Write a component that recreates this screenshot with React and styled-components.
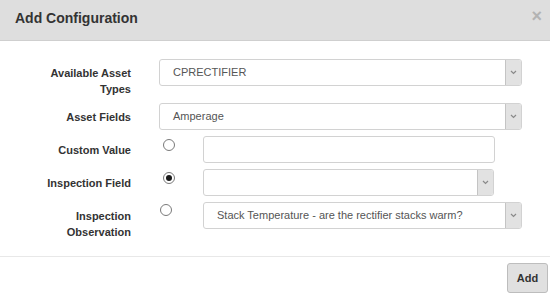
import styled, { createGlobalStyle } from "styled-components";

const GlobalStyle = createGlobalStyle`
    body {
        margin: 0;
        background: #fff;
        font-family: "Liberation Sans", Arial, sans-serif;
    }
`;

const rows = [
    { label: "Available Asset Types", value: "CPRECTIFIER", select: true },
    { label: "Asset Fields", value: "Amperage", select: true },
    { label: "Custom Value", radio: false, value: "", width: 292 },
    { label: "Inspection Field", radio: true, value: "", select: true, width: 291 },
    { label: "Inspection Observation", radio: false, value: "Stack Temperature - are the rectifier stacks warm?", select: true, shift: true },
];

const Chevron = () => (
    <svg width="7" height="5" viewBox="0 0 7 5">
        <path d="M1 1 L3.5 3.5 L6 1" fill="none" stroke="#8a8a8a" strokeWidth="1.2" />
    </svg>
);

const App = () => {
    return (
        <Modal>
            <GlobalStyle />
            <Header>
                <Title>Add Configuration</Title>
                <Close>×</Close>
            </Header>

            <Body>
                {rows.map((row) => (
                    <Row key={row.label}>
                        <Label>{row.label}</Label>
                        <Controls>
                            {row.radio !== undefined && (
                                <RadioCell $shift={row.shift}>
                                    <Radio $checked={row.radio} />
                                </RadioCell>
                            )}
                            <Field $width={row.width}>
                                <FieldText>{row.value}</FieldText>
                                {row.select && (
                                    <Arrow>
                                        <Chevron />
                                    </Arrow>
                                )}
                            </Field>
                        </Controls>
                    </Row>
                ))}
            </Body>

            <Footer>
                <Button type="button">Add</Button>
            </Footer>
        </Modal>
    );
};

export default App;

const Modal = styled.div`
    width: 550px;
    height: 296px;
    display: flex;
    flex-direction: column;
    background: #fff;
    overflow: hidden;
`;

const Header = styled.div`
    height: 41px;
    box-sizing: border-box;
    padding: 8px 8px 0 15px;
    display: flex;
    justify-content: space-between;
    align-items: flex-start;
    background: #dedede;
    border-bottom: 1px solid #cfcfcf;
`;

const Title = styled.div`
    font-size: 14px;
    line-height: 20px;
    font-weight: 700;
    color: #333;
`;

const Close = styled.div`
    font-size: 18px;
    line-height: 16px;
    font-weight: 700;
    color: #b3b3b3;
`;

const Body = styled.div`
    flex: 1;
    padding: 18px 0 0 45px;
    display: flex;
    flex-direction: column;
    gap: 6px;
`;

const Row = styled.div`
    display: grid;
    grid-template-columns: 86px 363px;
    column-gap: 28px;
    align-items: start;
`;

const Label = styled.div`
    padding-top: 6px;
    font-size: 11px;
    line-height: 16px;
    font-weight: 700;
    color: #333;
    text-align: right;
`;

const Controls = styled.div`
    display: flex;
    align-items: flex-start;
`;

const RadioCell = styled.div`
    width: 44px;
    box-sizing: border-box;
    flex: none;
    display: flex;
    padding-top: ${(props) => (props.$shift ? "2px" : "3px")};
    padding-left: ${(props) => (props.$shift ? "1px" : "4px")};
`;

const Radio = styled.span`
    width: 12px;
    height: 12px;
    box-sizing: border-box;
    border-radius: 50%;
    border: 1px solid #7a7a7a;
    background: #fff;
    display: flex;
    align-items: center;
    justify-content: center;

    &::after {
        content: "";
        width: 6px;
        height: 6px;
        border-radius: 50%;
        background: ${(props) => (props.$checked ? "#1a1a1a" : "transparent")};
    }
`;

const Field = styled.div`
    width: ${(props) => (props.$width ? `${props.$width}px` : "auto")};
    flex: ${(props) => (props.$width ? "none" : "1")};
    height: 27px;
    box-sizing: border-box;
    border: 1px solid #d2d2d2;
    border-radius: 3px;
    display: flex;
    align-items: stretch;
    background: #fff;
    overflow: hidden;
`;

const FieldText = styled.div`
    flex: 1;
    padding-left: 13px;
    font-size: 11px;
    line-height: 25px;
    color: #555;
    white-space: nowrap;
`;

const Arrow = styled.div`
    width: 15px;
    flex: none;
    display: flex;
    align-items: center;
    justify-content: center;
    background: #e2e2e2;
    border-left: 1px solid #c4c4c4;
`;

const Footer = styled.div`
    height: 40px;
    box-sizing: border-box;
    border-top: 1px solid #e8e8e8;
    padding: 6px 2px 0 0;
    display: flex;
    justify-content: flex-end;
    align-items: flex-start;
`;

const Button = styled.button`
    width: 41px;
    height: 30px;
    padding: 0;
    font-family: "Liberation Sans", Arial, sans-serif;
    font-size: 11px;
    font-weight: 700;
    color: #333;
    background: #e0e0e0;
    border: 1px solid #bdbdbd;
    border-radius: 3px;
`;
